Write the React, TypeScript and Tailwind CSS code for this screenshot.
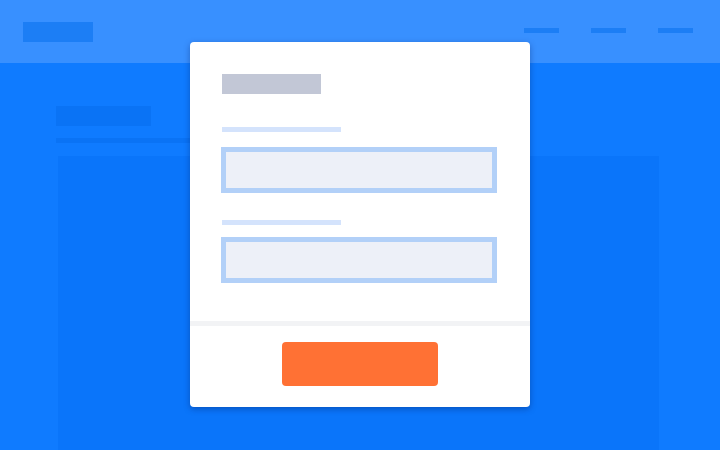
import React from 'react';

const NavDash: React.FC = () => <span className="block w-[35px] h-[5px] bg-[#1c7ef5]" />;

const Field: React.FC<{ first?: boolean }> = ({ first }) => (
  <div className={first ? 'mt-[33px]' : 'mt-[27px]'}>
    <div className="w-[119px] h-[5px] bg-[#d4e3fc]" />
    <div
      className={`${first ? 'mt-[15px]' : 'mt-[12px]'} -ml-px w-[276px] h-[46px] border-[5px] border-[#b2d0f8] bg-[#edf0f8]`}
    />
  </div>
);

const App: React.FC = () => {
  return (
    <div className="relative w-[720px] h-[450px] overflow-hidden bg-[#0f7bff]">
      <header className="h-[63px] bg-[#3890ff] flex items-start justify-between pl-[23px] pr-[27px]">
        <div className="mt-[22px] w-[70px] h-[20px] bg-[#1c7ef5]" />
        <nav className="mt-[28px] flex gap-[32px]">
          <NavDash />
          <NavDash />
          <NavDash />
        </nav>
      </header>

      <main className="pl-[56px]">
        <div className="mt-[43px] w-[95px] h-[20px] bg-[#0a73f5]" />
        <div className="mt-[12px] w-[300px] h-[5px] bg-[#0a73f5]" />
        <div className="mt-[13px] ml-[2px] w-[601px] h-[300px] bg-[#0a75fa]" />
      </main>

      <div className="absolute left-[190px] top-[42px] w-[340px] h-[365px] bg-white rounded-[4px] shadow-[0_2px_6px_rgba(0,20,80,0.35)] flex flex-col">
        <div className="px-[32px] pt-[32px] h-[279px]">
          <div className="w-[99px] h-[20px] bg-[#c2c7d6]" />
          <Field first />
          <Field />
        </div>
        <div className="h-[5px] bg-[#f2f3f5]" />
        <div className="flex-1 flex justify-center pt-[16px]">
          <button className="w-[156px] h-[44px] rounded-[4px] bg-[#ff7134]" />
        </div>
      </div>
    </div>
  );
};

export default App;
